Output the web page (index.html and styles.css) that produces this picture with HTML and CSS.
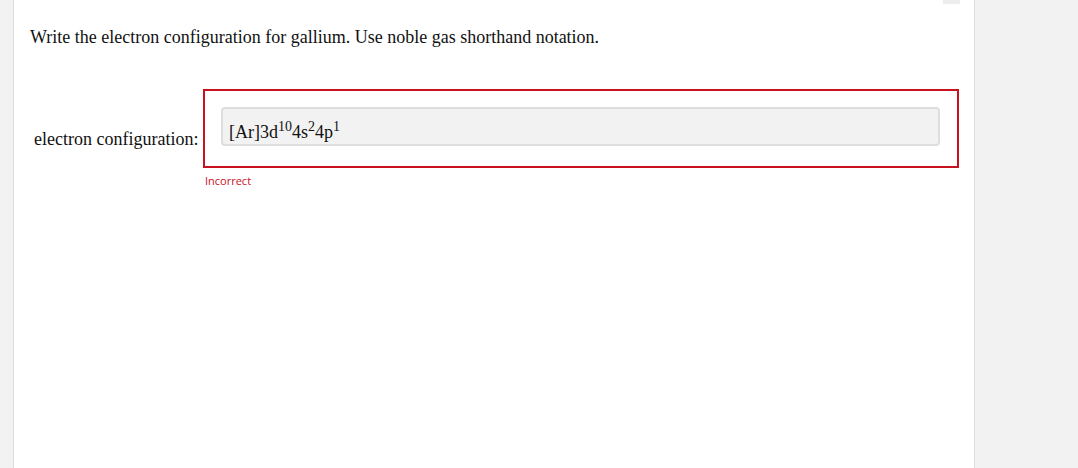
FILE: index.html
```html
<!DOCTYPE html>
<html>
<head>
<meta charset="utf-8">
<link rel="stylesheet" href="styles.css">
</head>
<body>
<div class="page">
  <div class="panel">
    <div class="topbar"><div class="tab"></div></div>
    <p class="question">Write the electron configuration for gallium. Use noble gas shorthand notation.</p>
    <div class="row">
      <div class="label">electron configuration:</div>
      <div class="answer">
        <div class="box">
          <div class="input">[Ar]3d<sup>10</sup>4s<sup>2</sup>4p<sup>1</sup></div>
        </div>
        <div class="feedback">Incorrect</div>
      </div>
    </div>
  </div>
</div>
</body>
</html>
```
FILE: styles.css
```css
html, body {
  margin: 0;
  padding: 0;
  background: #f2f2f2;
  height: 100%;
}
.page {
  display: flex;
  height: 468px;
  padding-left: 13px;
}
.panel {
  width: 960px;
  background: #ffffff;
  border-left: 1px solid #dedede;
  border-right: 1px solid #dedede;
  display: flex;
  flex-direction: column;
}
.topbar {
  height: 4px;
  display: flex;
  justify-content: flex-end;
  padding-right: 14px;
}
.tab {
  width: 17px;
  height: 4px;
  background: #ededed;
}
.question {
  margin: 23px 0 0 16px;
  font-family: "Liberation Serif", "Times New Roman", serif;
  font-size: 18px;
  color: #111;
  line-height: 20px;
}
.row {
  display: flex;
  margin-top: 42px;
  margin-left: 20px;
}
.label {
  font-family: "Liberation Serif", "Times New Roman", serif;
  font-size: 18px;
  color: #111;
  padding-top: 40px;
  width: 169px;
  line-height: 20px;
}
.answer {
  display: flex;
  flex-direction: column;
}
.box {
  width: 719px;
  border: 2px solid #c8121f;
  padding: 16px 17px 20px 16px;
}
.input {
  box-sizing: border-box;
  height: 39px;
  border: 2px solid #dedede;
  border-radius: 4px;
  background: #f2f2f2;
  padding: 13px 0 0 6px;
  font-family: "Liberation Serif", "Times New Roman", serif;
  font-size: 18px;
  color: #111;
  line-height: 20px;
}
.input sup {
  font-size: 14px;
  line-height: 0;
  vertical-align: 7px;
}
.feedback {
  margin-top: 6px;
  margin-left: 2px;
  font-family: "Open Sans", sans-serif;
  font-size: 11px;
  color: #c8121f;
  line-height: 14px;
}
```
